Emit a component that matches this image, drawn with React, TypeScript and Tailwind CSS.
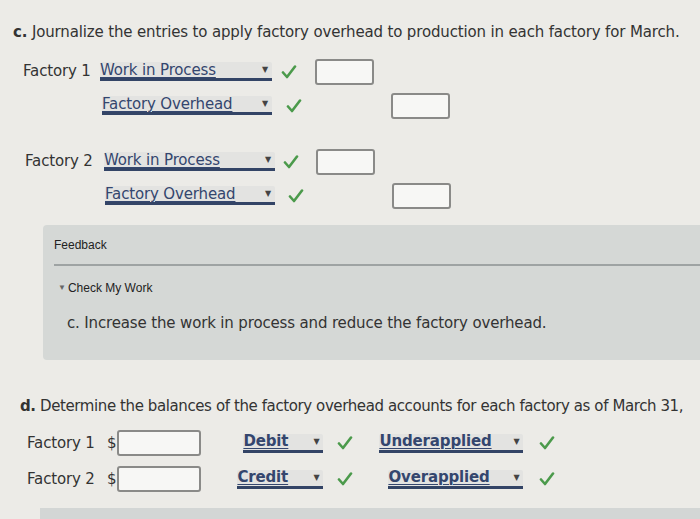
import React from "react";

const FONT = { fontFamily: '"DejaVu Sans", Verdana, sans-serif', letterSpacing: "-0.15px" };
const ARIAL = { fontFamily: '"Liberation Sans", Arial, sans-serif', letterSpacing: "0" };

function Check() {
  return (
    <svg width="16" height="14" viewBox="0 0 16 14" className="shrink-0">
      <path d="M2 7.5 L6 12 L14 1.5" fill="none" stroke="#4b9a4b" strokeWidth="2.6" strokeLinecap="round" strokeLinejoin="round" />
    </svg>
  );
}

function Select({ label, width, bold }: { label: string; width: number; bold?: boolean }) {
  return (
    <div
      className="flex items-center justify-between h-[19px] bg-[#e3e3e1] border-b-[3px] border-[#334466] rounded-t-[2px] pr-1 shrink-0"
      style={{ width }}
    >
      <span className={`text-[15px] leading-none text-[#34466e] underline underline-offset-2 decoration-1 whitespace-nowrap ${bold ? "font-bold" : ""}`}>
        {label}
      </span>
      <span className="text-[8px] text-[#444]">▼</span>
    </div>
  );
}

function Box({ w, h = 26 }: { w: number; h?: number }) {
  return <div className="bg-[#f7f7f5] border-2 border-[#8a8a88] rounded-[3px] shrink-0" style={{ width: w, height: h }} />;
}

type RowProps = { label?: string; labelX: number; account: string; selX: number; width: number; checkX: number; boxX: number };

function JournalRow({ label, labelX, account, selX, width, checkX, boxX }: RowProps) {
  return (
    <div className="flex items-center h-[26px]" style={{ paddingLeft: label ? labelX : selX }}>
      {label && <span className="text-[15px] text-[#333] shrink-0" style={{ width: selX - labelX }}>{label}</span>}
      <Select label={account} width={width} />
      <div className="shrink-0" style={{ marginLeft: checkX - selX - width }}><Check /></div>
      <div className="shrink-0" style={{ marginLeft: boxX - checkX - 16 }}>
        <Box w={59} />
      </div>
    </div>
  );
}

export default function App() {
  return (
    <div className="w-[700px] h-[519px] overflow-hidden bg-[#ecebe7] text-[#333]" style={FONT}>
      <div className="pt-[21px] pl-[13px] text-[15px] whitespace-nowrap">
        <b>c.</b> Journalize the entries to apply factory overhead to production in each factory for March.
      </div>

      <div className="mt-[15px] flex flex-col gap-[8px]">
        <JournalRow label="Factory 1" labelX={23} account="Work in Process" selX={100} width={172} checkX={281} boxX={315} />
        <JournalRow account="Factory Overhead" labelX={0} selX={102} width={170} checkX={286} boxX={391} />
      </div>
      <div className="mt-[30px] flex flex-col gap-[8px]">
        <JournalRow label="Factory 2" labelX={25} account="Work in Process" selX={104} width={171} checkX={283} boxX={316} />
        <JournalRow account="Factory Overhead" labelX={0} selX={105} width={170} checkX={288} boxX={392} />
      </div>

      <div className="mt-[16px] ml-[43px] h-[135px] bg-[#d5d8d6] rounded-l-[4px] pt-[11px]">
        <div className="pl-[11px] text-[12px] text-[#222]" style={ARIAL}>Feedback</div>
        <div className="ml-[11px] mt-[10px] h-[2px] bg-[#9ea3a3]" />
        <div className="mt-[13px] pl-[15px] flex items-center gap-[2px] text-[12px] text-[#222]" style={ARIAL}>
          <span className="text-[8px] text-[#666]">▼</span>
          <span>Check My Work</span>
        </div>
        <div className="mt-[15px] pl-[24px] text-[15px] text-[#333]">
          c. Increase the work in process and reduce the factory overhead.
        </div>
      </div>

      <div className="mt-[35px] pl-[20px] text-[15px] whitespace-nowrap tracking-[-0.4px]">
        <b>d.</b> Determine the balances of the factory overhead accounts for each factory as of March 31,
      </div>

      <div className="mt-[13px] flex flex-col gap-[10px]">
        <div className="flex items-center pl-[27px]">
          <span className="text-[15px] w-[80px] shrink-0">Factory 1</span>
          <span className="text-[15px] mr-[1px]">$</span>
          <Box w={84} />
          <div className="ml-[42px]"><Select label="Debit" width={80} bold /></div>
          <div className="ml-[14px]"><Check /></div>
          <div className="ml-[26px]"><Select label="Underapplied" width={144} bold /></div>
          <div className="ml-[16px]"><Check /></div>
        </div>
        <div className="flex items-center pl-[27px]">
          <span className="text-[15px] w-[80px] shrink-0">Factory 2</span>
          <span className="text-[15px] mr-[1px]">$</span>
          <Box w={84} />
          <div className="ml-[36px]"><Select label="Credit" width={86} bold /></div>
          <div className="ml-[14px]"><Check /></div>
          <div className="ml-[35px]"><Select label="Overapplied" width={135} bold /></div>
          <div className="ml-[16px]"><Check /></div>
        </div>
      </div>

      <div className="mt-[16px] ml-[40px] h-[20px] bg-[#d3d6d5]" />
    </div>
  );
}
